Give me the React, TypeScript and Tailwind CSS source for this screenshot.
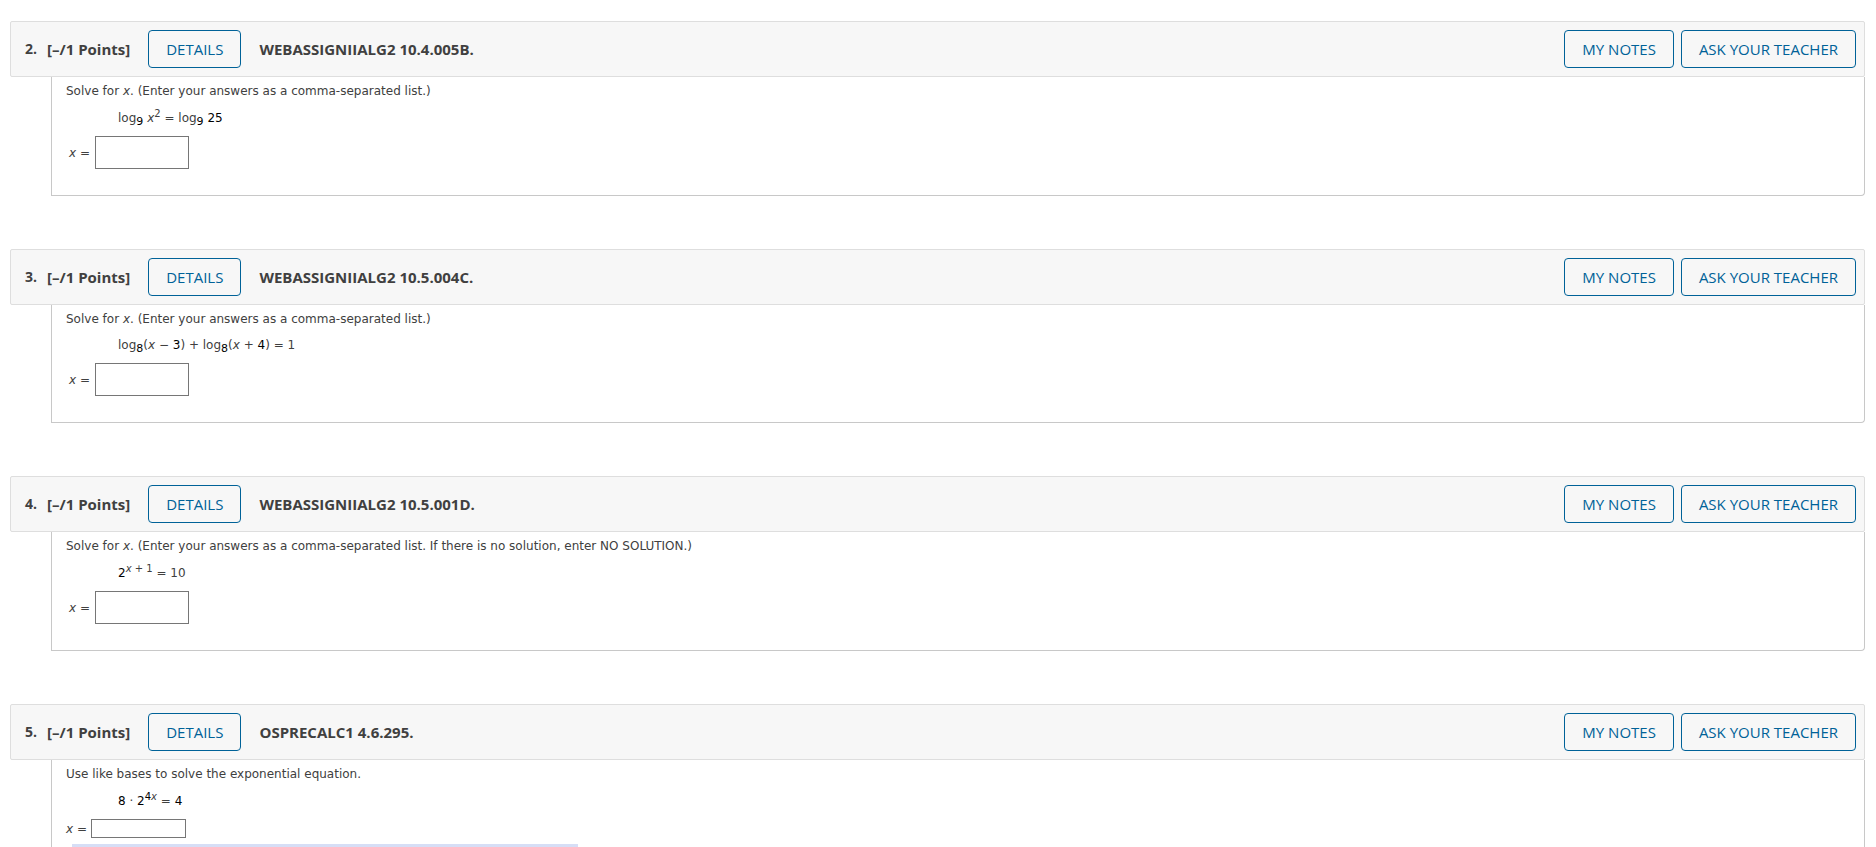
import { useId, type ReactNode } from "react";

interface Question {
  number: number;
  code: string;
  prompt: ReactNode;
  equation: ReactNode;
  compact?: boolean;
  inline?: boolean;
}

function Var() {
  return <i>x</i>;
}

function Num({ children }: { children: ReactNode }) {
  return <span className="text-black">{children}</span>;
}

function Sub({ children }: { children: ReactNode }) {
  return <sub className="bottom-0 align-sub text-[11px] leading-none text-black">{children}</sub>;
}

function Sup({ children }: { children: ReactNode }) {
  return <sup className="top-0 align-super text-[10px] leading-none">{children}</sup>;
}

const listPrompt = (
  <>
    Solve for <Var />. (Enter your answers as a comma-separated list.)
  </>
);

const questions: Question[] = [
  {
    number: 2,
    code: "WEBASSIGNIIALG2 10.4.005B.",
    prompt: listPrompt,
    equation: (
      <>
        log<Sub>9</Sub> <Var /><Sup>2</Sup> = log<Sub>9</Sub> <Num>25</Num>
      </>
    ),
  },
  {
    number: 3,
    code: "WEBASSIGNIIALG2 10.5.004C.",
    prompt: listPrompt,
    compact: true,
    equation: (
      <>
        log<Sub>8</Sub>(<Var /> − <Num>3</Num>) + log<Sub>8</Sub>(<Var /> + <Num>4</Num>) = 1
      </>
    ),
  },
  {
    number: 4,
    code: "WEBASSIGNIIALG2 10.5.001D.",
    prompt: (
      <>
        Solve for <Var />. (Enter your answers as a comma-separated list. If there is no solution, enter NO SOLUTION.)
      </>
    ),
    equation: (
      <>
        <Num>2</Num><Sup><Var /> + 1</Sup> = 10
      </>
    ),
  },
  {
    number: 5,
    code: "OSPRECALC1 4.6.295.",
    prompt: "Use like bases to solve the exponential equation.",
    inline: true,
    equation: (
      <>
        <Num>8</Num> · <Num>2</Num><Sup><Num>4</Num><Var /></Sup> = <Num>4</Num>
      </>
    ),
  },
];

function OutlineButton({ children }: { children: ReactNode }) {
  return (
    <button
      type="button"
      className="h-[38px] rounded border border-[#006298] px-[17px] text-[15px] font-medium whitespace-nowrap text-[#006298] hover:bg-[#e6f0f5]"
    >
      {children}
    </button>
  );
}

function QuestionCard({ question }: { question: Question }) {
  const inputId = useId();
  const { number, code, prompt, equation, compact, inline } = question;

  return (
    <section className="text-[#404040]">
      <header className="flex h-14 items-center rounded-xs border border-[#dedede] bg-[#f7f7f7] pr-2 pl-[14px] font-['Open_Sans',sans-serif]">
        <h2 className="flex flex-1 items-center text-[15px] font-bold">
          <span className="w-[22px] text-sm">{number}.</span>
          <span className="mr-[18px]">[–/1 Points]</span>
          <OutlineButton>DETAILS</OutlineButton>
          <span className="ml-[18px]">{code}</span>
        </h2>
        <div className="flex gap-[7px]">
          <OutlineButton>MY NOTES</OutlineButton>
          <OutlineButton>ASK YOUR TEACHER</OutlineButton>
        </div>
      </header>

      <div
        className={`ml-[41px] rounded-br border border-t-0 border-[#c8c8c8] pt-1 pl-[14px] font-['DejaVu_Sans',Verdana,sans-serif] text-xs ${
          inline ? "pb-0" : "pb-[26px]"
        }`}
      >
        <p className="leading-5">{prompt}</p>
        <p className={`h-5 pl-[52px] leading-5 ${compact ? "mt-[6px] mb-2" : "mt-[7px] mb-2"}`}>{equation}</p>
        <div className={`flex items-center ${inline ? "gap-1" : "gap-[5px] pl-[3px]"}`}>
          <label htmlFor={inputId}>
            <Var /> =
          </label>
          <input
            id={inputId}
            type="text"
            className={`border border-[#767676] bg-white px-1 ${inline ? "h-[19px] w-[95px]" : "h-[33px] w-[94px]"}`}
          />
        </div>
        {inline && <div className="mt-[6px] ml-[6px] h-10 w-[506px] bg-[#d6def6]" />}
      </div>
    </section>
  );
}

export default function App() {
  return (
    <main className="flex h-screen flex-col gap-[53px] overflow-hidden bg-white pt-[21px] pr-[11px] pl-[10px] *:shrink-0">
      {questions.map((question) => (
        <QuestionCard key={question.number} question={question} />
      ))}
    </main>
  );
}
